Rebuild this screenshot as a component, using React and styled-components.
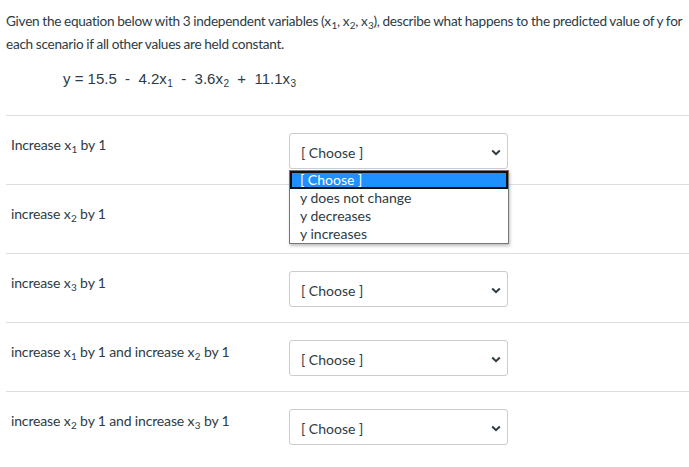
import React from 'react';
import styled, { createGlobalStyle } from 'styled-components';

const GlobalStyle = createGlobalStyle`
  html, body {
    margin: 0;
    padding: 0;
    background: #ffffff;
  }
  body {
    font-family: Lato, 'Open Sans', sans-serif;
    color: #2d3b45;
  }
`;

const Page = styled.div`
  width: 689px;
  height: 467px;
  overflow: hidden;
  padding-left: 6px;
  box-sizing: border-box;
`;

const Intro = styled.p`
  margin: 0;
  padding-top: 10px;
  font-size: 13.6px;
  line-height: 23px;
  letter-spacing: -0.27px;
  word-spacing: -0.3px;
`;

const Sub = styled.sub`
  font-size: 10px;
  line-height: 0;
  vertical-align: -3px;
  margin-left: 0.5px;
`;

const Equation = styled.p`
  margin: 13px 0 26px 57px;
  font-family: 'Liberation Sans', Arial, sans-serif;
  font-size: 15px;
  line-height: 20px;
  white-space: pre;
`;

const Row = styled.div`
  display: flex;
  align-items: flex-start;
  height: 68px;
  border-top: 1px solid #dcdfe1;
`;

const Label = styled.div`
  width: 278px;
  padding: 19px 0 0 5px;
  box-sizing: border-box;
  font-size: 14px;
  line-height: 20px;
  letter-spacing: -0.15px;
`;

const SelectWrap = styled.div`
  position: relative;
  margin-top: 17px;
  margin-left: 5px;
  width: 219px;
`;

const SelectBox = styled.div`
  display: flex;
  align-items: center;
  justify-content: space-between;
  height: 36px;
  padding: 3px 6px 0 11px;
  box-sizing: border-box;
  border: 1px solid #c7cdd1;
  border-radius: 3px;
  background: #ffffff;
  font-size: 14px;
`;

const Listbox = styled.ul`
  position: absolute;
  top: 37px;
  left: 0;
  width: 220px;
  margin: 0;
  padding: 0;
  list-style: none;
  background: #ffffff;
  border: 1px solid #767676;
  box-sizing: border-box;
  box-shadow: 1px 2px 3px rgba(0, 0, 0, 0.25);
  z-index: 2;
`;

const Option = styled.li`
  height: 18px;
  line-height: 18px;
  padding-left: 10px;
  box-sizing: border-box;
  font-size: 14px;
  color: ${(p) => (p.$active ? '#ffffff' : '#2d3b45')};
  background: ${(p) => (p.$active ? '#1e90ff' : 'transparent')};
  outline: ${(p) => (p.$active ? '2px solid #111111' : 'none')};
  outline-offset: -2px;
`;

const Chevron = () => (
  <svg width="10" height="7" viewBox="0 0 10 7">
    <path d="M1.2 1.5 L5 5.2 L8.8 1.5" fill="none" stroke="#2d3b45" strokeWidth="2" />
  </svg>
);

const options = ['[ Choose ]', 'y does not change', 'y decreases', 'y increases'];

const Select = ({ open }) => (
  <SelectWrap>
    <SelectBox>
      <span>[ Choose ]</span>
      <Chevron />
    </SelectBox>
    {open && (
      <Listbox>
        {options.map((o, i) => (
          <Option key={o} $active={i === 0}>{o}</Option>
        ))}
      </Listbox>
    )}
  </SelectWrap>
);

const rows = [
  { text: <>Increase x<Sub>1</Sub> by 1</>, open: true },
  { text: <>increase x<Sub>2</Sub> by 1</> },
  { text: <>increase x<Sub>3</Sub> by 1</> },
  { text: <>increase x<Sub>1</Sub> by 1 and increase x<Sub>2</Sub> by 1</> },
  { text: <>increase x<Sub>2</Sub> by 1 and increase x<Sub>3</Sub> by 1</> },
];

const App = () => {
  return (
    <React.Fragment>
      <GlobalStyle />
      <Page>
        <Intro>
          Given the equation below with 3 independent variables (x<Sub>1</Sub>, x<Sub>2</Sub>, x<Sub>3</Sub>), describe what happens to the predicted value of y for each scenario if all other values are held constant.
        </Intro>
        <Equation>
          y = 15.5  -  4.2x<Sub>1</Sub>  -  3.6x<Sub>2</Sub>  +  11.1x<Sub>3</Sub>
        </Equation>
        {rows.map((r, i) => (
          <Row key={i}>
            <Label>{r.text}</Label>
            <Select open={r.open} />
          </Row>
        ))}
      </Page>
    </React.Fragment>
  );
};

export default App;
